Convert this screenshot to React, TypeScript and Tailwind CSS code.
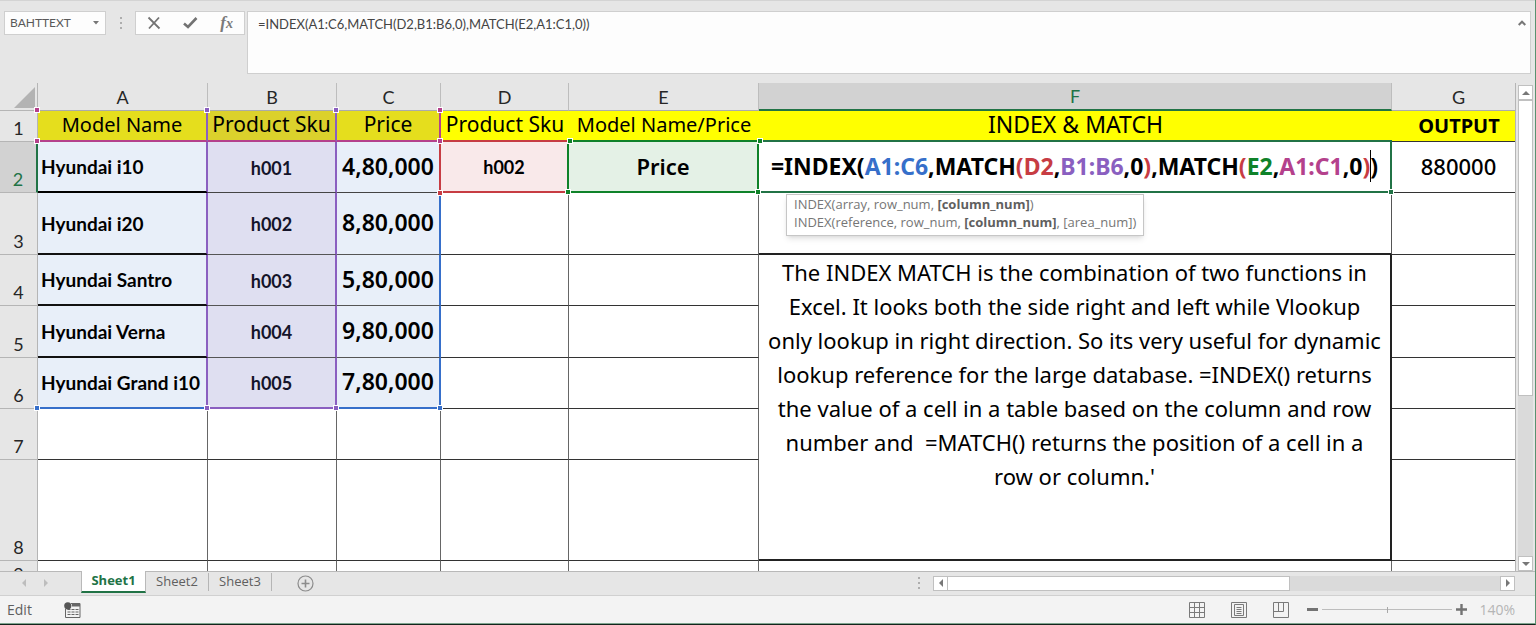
import type { ReactNode } from 'react';
import clsx from 'clsx';

const comic = "font-['Noto_Sans','Open_Sans',sans-serif]";
const calibri = "font-['Lato','Open_Sans',sans-serif]";
const segoe = "font-['Open_Sans','Noto_Sans',sans-serif]";

const columns = [
  { name: 'A', width: 'w-[170px]' },
  { name: 'B', width: 'w-[129px]' },
  { name: 'C', width: 'w-[104px]' },
  { name: 'D', width: 'w-[128px]' },
  { name: 'E', width: 'w-[190px]' },
  { name: 'F', width: '' },
  { name: 'G', width: 'w-[134px]' },
];

const cars = [
  { row: 3, name: 'Hyundai i20', sku: 'h002', price: '8,80,000', height: 'h-[62px]' },
  { row: 4, name: 'Hyundai Santro', sku: 'h003', price: '5,80,000', height: 'h-[51px]' },
  { row: 5, name: 'Hyundai Verna', sku: 'h004', price: '9,80,000', height: 'h-[52px]' },
  { row: 6, name: 'Hyundai Grand i10', sku: 'h005', price: '7,80,000', height: 'h-[51px]' },
];

const note = [
  'The INDEX MATCH is the combination of two functions in',
  'Excel. It looks both the side right and left while Vlookup',
  'only lookup in right direction. So its very useful for dynamic',
  'lookup reference for the large database. =INDEX() returns',
  'the value of a cell in a table based on the column and row',
  'number and \u00a0=MATCH() returns the position of a cell in a',
  "row or column.'",
];

const formula = [
  { text: '=INDEX(', color: 'text-black' },
  { text: 'A1:C6', color: 'text-[#366fca]' },
  { text: ',MATCH', color: 'text-black' },
  { text: '(', color: 'text-[#c73c43]' },
  { text: 'D2', color: 'text-[#c73c43]' },
  { text: ',', color: 'text-black' },
  { text: 'B1:B6', color: 'text-[#8a5fc0]' },
  { text: ',0', color: 'text-black' },
  { text: ')', color: 'text-[#c73c43]' },
  { text: ',MATCH', color: 'text-black' },
  { text: '(', color: 'text-[#c73c43]' },
  { text: 'E2', color: 'text-[#0f8229]' },
  { text: ',', color: 'text-black' },
  { text: 'A1:C1', color: 'text-[#b4418c]' },
  { text: ',0', color: 'text-black' },
  { text: ')', color: 'text-[#c73c43]' },
];

// Square grip on a corner of a referenced range
function Handle({ className }: { className: string }) {
  return <span className={clsx('absolute z-10 size-[6px] border border-white', className)} />;
}

function RowHeader({ n, active }: { n: number; active?: boolean }) {
  return (
    <th
      scope="row"
      className={clsx(
        'border-b p-0 text-center align-bottom text-[18px] leading-[26px] font-normal',
        calibri,
        active
          ? 'border-r-2 border-b-[#b5b5b5] border-r-[#217346] bg-[#d2d2d2] text-[#217346]'
          : 'border-r border-[#b5b5b5] bg-[#e6e6e6] text-[#262626]'
      )}
    >
      {n}
    </th>
  );
}

function Cell({ className, children }: { className?: string; children?: ReactNode }) {
  return <td className={clsx('relative p-0 whitespace-nowrap', className)}>{children}</td>;
}

function Dots() {
  return (
    <svg width="4" height="14" viewBox="0 0 4 14" fill="#adadad" aria-hidden="true">
      <rect x="1" y="1" width="2" height="2" />
      <rect x="1" y="6" width="2" height="2" />
      <rect x="1" y="11" width="2" height="2" />
    </svg>
  );
}

function Arrow({ dir, color = '#777' }: { dir: 'up' | 'down' | 'left' | 'right'; color?: string }) {
  const points = {
    up: '0,6 4,2 8,6',
    down: '0,2 8,2 4,6',
    left: '6,0 2,4 6,8',
    right: '2,0 6,4 2,8',
  };
  return (
    <svg width="8" height="8" viewBox="0 0 8 8" aria-hidden="true">
      <polygon points={points[dir]} fill={color} />
    </svg>
  );
}

function FormulaBar() {
  return (
    <header className="flex h-[83px] shrink-0 items-start border-t border-[#d4d4d4] pt-[10px] pr-1 pl-1">
      <div className="flex h-6 w-[102px] items-center border border-[#cfcfcf] bg-[#fdfdfd] pl-[5px]">
        <input
          aria-label="Name Box"
          defaultValue="BAHTTEXT"
          className={clsx('w-[78px] bg-transparent text-[12px] text-[#595959] outline-none', calibri)}
        />
        <button type="button" aria-label="Open name list" className="flex w-4 justify-center">
          <svg width="6" height="4" viewBox="0 0 6 4">
            <polygon points="0,0 6,0 3,3.5" fill="#777" />
          </svg>
        </button>
      </div>
      <div className="flex h-6 w-[29px] items-center justify-center">
        <Dots />
      </div>
      <div className="flex h-6 w-[110px] items-center justify-around border border-[#cfcfcf] bg-[#fdfdfd]">
        <button type="button" aria-label="Cancel">
          <svg width="14" height="14" viewBox="0 0 14 14" fill="none" stroke="#737373" strokeWidth="1.8">
            <path d="M1.5 1.5 L12.5 12.5 M12 1.5 L2 12.5" />
          </svg>
        </button>
        <button type="button" aria-label="Enter">
          <svg width="15" height="14" viewBox="0 0 15 14" fill="none" stroke="#737373" strokeWidth="2.6">
            <path d="M1 7.5 L5 11 L13.5 2" />
          </svg>
        </button>
        <button
          type="button"
          aria-label="Insert Function"
          className="font-['Liberation_Serif',serif] text-[17px] leading-5 font-bold text-[#7a7a7a] italic"
        >
          f<span className="text-[14px]">x</span>
        </button>
      </div>
      <div className="ml-0.5 flex h-[63px] flex-1 border border-[#cfcfcf] bg-[#fdfdfd]">
        <textarea
          aria-label="Formula Bar"
          defaultValue="=INDEX(A1:C6,MATCH(D2,B1:B6,0),MATCH(E2,A1:C1,0))"
          spellCheck={false}
          className={clsx(
            'flex-1 resize-none bg-transparent py-0.5 pl-[10px] text-[13px] leading-5 text-[#444] outline-none',
            calibri
          )}
        />
        <button type="button" aria-label="Collapse Formula Bar" className="flex h-[22px] w-4 items-center justify-center">
          <svg width="8" height="6" viewBox="0 0 8 6" fill="none" stroke="#777" strokeWidth="2">
            <path d="M0.7 5 L4 1.7 L7.3 5" />
          </svg>
        </button>
      </div>
    </header>
  );
}

function FunctionTip() {
  return (
    <div
      className={clsx(
        'absolute top-px left-[27px] z-20 border border-[#c6c6c6] bg-white px-[7px] pb-1 text-left text-[13px] leading-[18px] text-[#767676] shadow-md',
        segoe
      )}
    >
      <p>
        INDEX(array, row_num, <b className="text-[#5f5f5f]">[column_num]</b>)
      </p>
      <p>
        INDEX(reference, row_num, <b className="text-[#5f5f5f]">[column_num]</b>, [area_num])
      </p>
    </div>
  );
}

function Sheet() {
  const title = clsx('border-b pb-0.5 text-center leading-[27px] text-black', comic);
  const nameCell = clsx('border-r-2 border-r-[#8a5fc0] bg-[#e8eff9] pt-0.5 pl-[3px] text-left text-[19px] font-bold text-black', calibri);
  const skuCell = clsx('border-r-2 border-r-[#8a5fc0] bg-[#dfdff1] pt-0.5 text-center text-[18px] font-bold text-[#14142a]', calibri);
  const priceCell = clsx('bg-[#e8eff9] pb-0.5 text-center text-[23px] font-semibold text-black', comic);
  const plain = 'border-r border-b border-r-[#666] border-b-[#333]';

  return (
    // the last column runs on under the scroll bar
    <table className="w-[calc(100%+11px)] table-fixed border-separate border-spacing-0 bg-white">
      <colgroup>
        <col className="w-[38px]" />
        {columns.map((col) => (
          <col key={col.name} className={col.width} />
        ))}
      </colgroup>
      <thead>
        <tr className="h-7">
          <th className="border-r border-b border-[#b5b5b5] bg-[#e6e6e6] p-0 align-bottom">
            <svg className="mb-0.5 ml-[14px]" width="21" height="21" viewBox="0 0 21 21" aria-hidden="true">
              <polygon points="21,0 21,21 0,21" fill="#b3b3b3" />
            </svg>
          </th>
          {columns.map((col) => (
            <th
              key={col.name}
              scope="col"
              className={clsx(
                'border-r border-r-[#bdbdbd] p-0 text-[18px] leading-[26px] font-normal',
                calibri,
                col.name === 'F'
                  ? 'border-b-2 border-b-[#217346] bg-[#d2d2d2] text-[#217346]'
                  : 'border-b border-b-[#ababab] bg-[#e6e6e6] text-[#262626]'
              )}
            >
              {col.name}
            </th>
          ))}
        </tr>
      </thead>
      <tbody>
        <tr className="h-[31px]">
          <RowHeader n={1} />
          <Cell className={clsx(title, 'border-r-2 border-b-2 border-r-[#8a5fc0] border-b-[#b4418c] bg-[#e5de1d] text-[20px]')}>
            Model Name
            <Handle className="-top-1 -left-1 bg-[#b4418c]" />
            <Handle className="-top-1 -right-1 bg-[#8a5fc0]" />
            <Handle className="-bottom-1 -left-1 bg-[#b4418c]" />
          </Cell>
          <Cell className={clsx(title, 'border-r-2 border-b-2 border-r-[#8a5fc0] border-b-[#b4418c] bg-[#dbd12c] text-[21px]')}>
            Product Sku
            <Handle className="-top-1 -right-1 bg-[#8a5fc0]" />
          </Cell>
          <Cell className={clsx(title, 'border-r-2 border-b-2 border-r-[#b4418c] border-b-[#b4418c] bg-[#e5de1d] text-[21px]')}>
            Price
            <Handle className="-top-1 -right-1 bg-[#b4418c]" />
            <Handle className="-right-1 -bottom-1 bg-[#b4418c]" />
          </Cell>
          <Cell className={clsx(title, 'border-b-2 border-b-[#c73c43] bg-[#ffff00] text-[21px]')}>
            Product Sku
            <Handle className="-right-1 -bottom-1 bg-[#0f8229]" />
          </Cell>
          <Cell className={clsx(title, 'border-b-2 border-b-[#0f8229] bg-[#ffff00] text-[20px]')}>
            Model Name/Price
            <Handle className="-right-1 -bottom-1 bg-[#0f8229]" />
          </Cell>
          <Cell className={clsx(title, 'border-b-2 border-b-[#217346] bg-[#ffff00] text-[23px]')}>INDEX &amp; MATCH</Cell>
          <Cell className={clsx(title, 'border-b-[#333] bg-[#ffff00] text-[20px] font-bold')}>OUTPUT</Cell>
        </tr>

        <tr className="h-[51px]">
          <RowHeader n={2} active />
          <Cell className={clsx(nameCell, 'border-b-2 border-b-black')}>Hyundai i10</Cell>
          <Cell className={clsx(skuCell, 'border-b border-b-[#444]')}>h001</Cell>
          <Cell className={clsx(priceCell, 'border-r-2 border-b border-r-[#c73c43] border-b-[#444]')}>
            4,80,000
            <Handle className="-right-1 -bottom-1 bg-[#c73c43]" />
          </Cell>
          <Cell className={clsx('border-r-2 border-b-2 border-r-[#0f8229] border-b-[#c73c43] bg-[#f9e9ea] pt-0.5 text-center text-[18px] font-bold', calibri)}>
            h002
            <Handle className="-right-1 -bottom-1 bg-[#0f8229]" />
          </Cell>
          <Cell className={clsx('border-r-2 border-b-2 border-[#0f8229] bg-[#e4f1e6] text-center text-[22px] font-semibold', comic)}>
            Price
            <Handle className="-right-1 -bottom-1 bg-[#0f8229]" />
          </Cell>
          <Cell className={clsx('border-r-2 border-b-2 border-[#217346] text-center text-[23px] font-bold', comic)}>
            {formula.map((part, i) => (
              <span key={i} className={part.color}>
                {part.text}
              </span>
            ))}
            <span className="relative">
              <span className="absolute inset-y-0 left-0 w-px bg-black" />)
            </span>
            <Handle className="-right-1 -bottom-1 bg-[#217346]" />
          </Cell>
          <Cell className={clsx(plain, 'pb-0.5 text-center text-[22px] font-medium', comic)}>880000</Cell>
        </tr>

        {cars.map((car) => (
          <tr key={car.row} className={car.height}>
            <RowHeader n={car.row} />
            <Cell className={clsx(nameCell, 'border-b-2', car.row === 6 ? 'border-b-[#366fca]' : 'border-b-[#111]')}>
              {car.name}
              {car.row === 6 && <Handle className="-bottom-1 -left-1 bg-[#366fca]" />}
              {car.row === 6 && <Handle className="-right-1 -bottom-1 bg-[#8a5fc0]" />}
            </Cell>
            <Cell className={clsx(skuCell, car.row === 6 ? 'border-b-2 border-b-[#8a5fc0]' : 'border-b border-b-[#555]')}>
              {car.sku}
              {car.row === 6 && <Handle className="-right-1 -bottom-1 bg-[#8a5fc0]" />}
            </Cell>
            <Cell
              className={clsx(
                priceCell,
                'border-r-2 border-r-[#366fca]',
                car.row === 6 ? 'border-b-2 border-b-[#366fca]' : 'border-b border-b-[#555]'
              )}
            >
              {car.price}
              {car.row === 6 && <Handle className="-right-1 -bottom-1 bg-[#366fca]" />}
            </Cell>
            <Cell className={plain} />
            <Cell className={clsx(plain, car.row > 3 && 'border-r-[#111]')} />
            {car.row === 3 && (
              <Cell className="border-r border-b-2 border-r-[#555] border-b-[#222]">
                <FunctionTip />
              </Cell>
            )}
            {car.row === 4 && (
              <td
                rowSpan={5}
                className={clsx(
                  'border-r-2 border-b-2 border-[#222] p-0 text-center align-top text-[22px] leading-[34px] whitespace-nowrap text-black',
                  comic
                )}
              >
                {note.map((line) => (
                  <p key={line}>{line}</p>
                ))}
              </td>
            )}
            <Cell className={plain} />
          </tr>
        ))}

        {[7, 8].map((n) => (
          <tr key={n} className={n === 7 ? 'h-[51px]' : 'h-[101px]'}>
            <RowHeader n={n} />
            <Cell className={plain} />
            <Cell className={plain} />
            <Cell className={plain} />
            <Cell className={plain} />
            <Cell className={clsx(plain, 'border-r-[#111]')} />
            <Cell className={plain} />
          </tr>
        ))}
        <tr>
          <RowHeader n={9} />
          {columns.map((col) => (
            <Cell key={col.name} className={plain} />
          ))}
        </tr>
      </tbody>
    </table>
  );
}

const scrollButton = 'flex size-[15px] shrink-0 items-center justify-center border border-[#c0c0c0] bg-white';

function VerticalScroll() {
  return (
    <div className="flex w-[20px] shrink-0 flex-col items-center border-l border-[#b5b5b5] bg-[#e6e6e6] pt-0.5">
      <button type="button" aria-label="Scroll up" className={scrollButton}>
        <Arrow dir="up" />
      </button>
      <div className="flex w-[15px] flex-1 flex-col bg-[#dadada]">
        <div className="h-[65%] border border-[#c0c0c0] bg-white" />
      </div>
      <button type="button" aria-label="Scroll down" className={scrollButton}>
        <Arrow dir="down" />
      </button>
    </div>
  );
}

function SheetTabs() {
  return (
    <div className={clsx('flex h-6 shrink-0 items-start border-t border-[#b9b9b9] bg-[#e6e6e6] text-[13px] leading-[18px] text-[#5f5f5f]', segoe)}>
      <div className="flex h-[22px] w-[81px] items-center gap-[14px] pl-5">
        <button type="button" aria-label="Previous sheet">
          <Arrow dir="left" color="#bdbdbd" />
        </button>
        <button type="button" aria-label="Next sheet">
          <Arrow dir="right" color="#bdbdbd" />
        </button>
      </div>
      <button type="button" className="-mt-px h-[22px] w-[65px] border-x border-b-2 border-x-[#b9b9b9] border-b-[#217346] bg-white pb-0.5 font-bold text-[#217346]">
        Sheet1
      </button>
      <button type="button" className="mt-px h-[18px] w-[63px] border-r border-[#b5b5b5] pb-0.5 leading-4">
        Sheet2
      </button>
      <button type="button" className="mt-px h-[18px] w-[63px] border-r border-[#b5b5b5] pb-0.5 leading-4">
        Sheet3
      </button>
      <button type="button" aria-label="New sheet" className="mt-[3px] ml-[25px]">
        <svg width="17" height="17" viewBox="0 0 17 17" fill="none" stroke="#8c8c8c">
          <circle cx="8.5" cy="8.5" r="7.5" strokeWidth="1.2" />
          <path d="M8.5 4.5 V12.5 M4.5 8.5 H12.5" strokeWidth="1.6" />
        </svg>
      </button>
      <div className="ml-auto flex h-[22px] w-[618px] items-center pr-5">
        <Dots />
        <div className="ml-3 flex flex-1">
          <button type="button" aria-label="Scroll left" className={scrollButton}>
            <Arrow dir="left" />
          </button>
          <div className="flex h-[15px] flex-1 bg-[#dadada]">
            <div className="w-[62%] border border-l-0 border-[#c0c0c0] bg-white" />
          </div>
          <button type="button" aria-label="Scroll right" className={scrollButton}>
            <Arrow dir="right" />
          </button>
        </div>
      </div>
    </div>
  );
}

function StatusBar() {
  return (
    <footer
      className={clsx(
        'flex h-[29px] shrink-0 items-center border-t border-b border-t-[#d0d0d0] border-b-[#7fa48f] bg-[#f3f3f3] pr-5 pl-[7px] text-[14px] text-[#5f5f5f]',
        segoe
      )}
    >
      <span>Edit</span>
      <button type="button" aria-label="Record Macro" className="ml-8">
        <svg width="17" height="16" viewBox="0 0 17 16" fill="none" stroke="#666">
          <path d="M1.5 7 V15.5 H16 V1.5 H7" />
          <path d="M8 3 H16" strokeWidth="3" />
          <path d="M3.5 7.5 H14.5 M3.5 10 H14.5 M3.5 12.5 H14.5" strokeDasharray="3 1" />
          <circle cx="3.8" cy="3.8" r="3.6" fill="#555" stroke="none" />
        </svg>
      </button>
      <div className="ml-auto flex items-center gap-[26px]">
        <button type="button" aria-label="Normal">
          <svg width="16" height="16" viewBox="0 0 16 16" fill="none" stroke="#7a7a7a">
            <path d="M0.5 0.5 H15.5 V15.5 H0.5 Z M0.5 5.5 H15.5 M0.5 10.5 H15.5 M5.5 0.5 V15.5 M10.5 0.5 V15.5" />
          </svg>
        </button>
        <button type="button" aria-label="Page Layout">
          <svg width="16" height="16" viewBox="0 0 16 16" fill="none" stroke="#7a7a7a">
            <path d="M0.5 0.5 H15.5 V15.5 H0.5 Z M3.5 2.5 H12.5 V13.5 H3.5 Z M5.5 5.5 H10.5 M5.5 7.5 H10.5 M5.5 9.5 H10.5 M5.5 11.5 H10.5" />
          </svg>
        </button>
        <button type="button" aria-label="Page Break Preview">
          <svg width="16" height="16" viewBox="0 0 16 16" fill="none" stroke="#7a7a7a">
            <path d="M0.5 0.5 H15.5 V15.5 H0.5 Z M0.5 9.5 H10.5 V0.5 M5.5 0.5 V9.5" />
          </svg>
        </button>
      </div>
      <button type="button" aria-label="Zoom out" className="ml-[18px]">
        <svg width="11" height="11" viewBox="0 0 11 11">
          <rect y="4" width="11" height="3" fill="#737373" />
        </svg>
      </button>
      <input
        type="range"
        aria-label="Zoom"
        defaultValue={50}
        className="mx-1 h-px w-[130px] appearance-none bg-[#bdbdbd] [&::-webkit-slider-thumb]:h-[6px] [&::-webkit-slider-thumb]:w-px [&::-webkit-slider-thumb]:appearance-none [&::-webkit-slider-thumb]:bg-[#a8a8a8]"
      />
      <button type="button" aria-label="Zoom in">
        <svg width="11" height="11" viewBox="0 0 11 11" fill="none" stroke="#737373" strokeWidth="2.4">
          <path d="M0 5.5 H11 M5.5 0 V11" />
        </svg>
      </button>
      <span className="ml-3 w-9 text-right text-[#b5b5b5]">140%</span>
    </footer>
  );
}

export default function App() {
  return (
    <div className="flex h-screen flex-col overflow-hidden border-r border-b border-r-[#5a9270] border-b-[#12241b] bg-[#e6e6e6]">
      <FormulaBar />
      <main className="flex min-h-0 flex-1">
        <div className="min-w-0 flex-1 overflow-hidden">
          <Sheet />
        </div>
        <VerticalScroll />
      </main>
      <SheetTabs />
      <StatusBar />
    </div>
  );
}
